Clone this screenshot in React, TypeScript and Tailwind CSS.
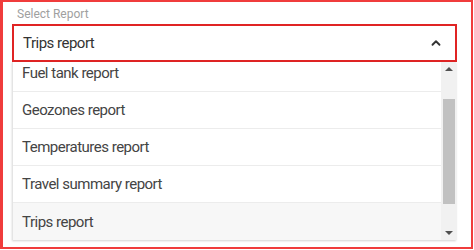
import { ChevronUp } from 'lucide-react';

const reports = [
  'Fuel tank report',
  'Geozones report',
  'Temperatures report',
  'Travel summary report',
  'Trips report',
];

export default function App() {
  const selected = 'Trips report';

  return (
    <div
      className="w-[473px] h-[249px] border-2 border-l-[3px] border-[#f03c3c] bg-white pl-[9px] pr-[13px]"
      style={{ fontFamily: 'Roboto, "Liberation Sans", sans-serif' }}
    >
      {/* label */}
      <div className="h-[22px] pt-[4px] pl-[5px] text-[12px] leading-[16px] text-[#a0a0a0]">Select Report</div>

      {/* select box */}
      <div className="h-[38px] w-[445px] flex items-center justify-between border-2 border-[#e02424] pl-[9px] pr-[12px]">
        <span className="text-[15px] tracking-[-0.5px] text-[#333] leading-none">{selected}</span>
        <ChevronUp className="w-[14px] h-[14px] text-[#333]" strokeWidth={3.2} />
      </div>

      {/* dropdown list */}
      <div className="w-[444px] h-[178px] flex border-l border-[#e4e4e4] shadow-[0_1px_2px_rgba(0,0,0,0.18)]">
        <div className="flex-1 overflow-hidden">
          <div className="-mt-[7px]">
            {reports.map((r, i) => (
              <div
                key={r}
                className={
                  'h-[37px] flex items-center pt-[1px] pl-[9px] text-[15px] tracking-[-0.5px] text-[#444] ' +
                  (i < reports.length - 1 ? 'border-b border-[#ececec] ' : '') +
                  (r === selected ? 'bg-[#f7f7f7]' : 'bg-white')
                }
              >
                {r}
              </div>
            ))}
          </div>
        </div>

        {/* scrollbar */}
        <div className="w-[15px] bg-[#f1f1f1] flex flex-col items-center">
          <div className="h-[14px] flex items-center justify-center">
            <div className="w-0 h-0 border-l-[4px] border-r-[4px] border-b-[4px] border-l-transparent border-r-transparent border-b-[#505050]" />
          </div>
          <div className="h-[23px]" />
          <div className="w-[12px] h-[105px] bg-[#c1c1c1]" />
          <div className="flex-1" />
          <div className="h-[14px] flex items-center justify-center">
            <div className="w-0 h-0 border-l-[4px] border-r-[4px] border-t-[4px] border-l-transparent border-r-transparent border-t-[#505050]" />
          </div>
        </div>
      </div>
    </div>
  );
}
